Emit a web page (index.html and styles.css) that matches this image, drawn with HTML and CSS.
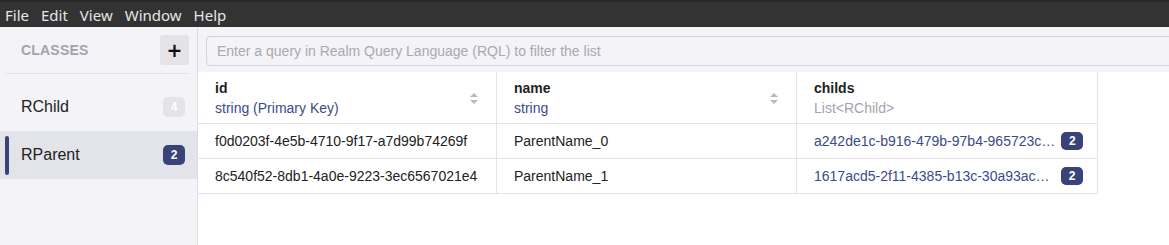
FILE: index.html
```html
<!DOCTYPE html>
<html lang="en">
<head>
  <meta charset="UTF-8">
  <title>Realm Studio</title>
  <link rel="stylesheet" href="styles.css">
</head>
<body>
<div class="menubar">
  <span>File</span>
  <span>Edit</span>
  <span>View</span>
  <span>Window</span>
  <span>Help</span>
</div>

<div class="app">
  <div class="sidebar">
    <div class="sidebar-head">
      <span class="sidebar-title">CLASSES</span>
      <button class="btn-add">+</button>
    </div>
    <div class="class-list">
      <div class="class-item">
        <span>RChild</span>
        <span class="badge badge-muted">4</span>
      </div>
      <div class="class-item selected">
        <span>RParent</span>
        <span class="badge">2</span>
      </div>
    </div>
  </div>

  <div class="main">
    <div class="query-bar">
      <input class="query-input" type="text" placeholder="Enter a query in Realm Query Language (RQL) to filter the list">
    </div>

    <div class="grid">
      <div class="row head">
        <div class="cell">
          <div class="col-info">
            <div class="col-name">id</div>
            <div class="col-type">string (Primary Key)</div>
          </div>
          <span class="sort"></span>
        </div>
        <div class="cell">
          <div class="col-info">
            <div class="col-name">name</div>
            <div class="col-type">string</div>
          </div>
          <span class="sort"></span>
        </div>
        <div class="cell">
          <div class="col-info">
            <div class="col-name">childs</div>
            <div class="col-type muted">List&lt;RChild&gt;</div>
          </div>
        </div>
      </div>

      <div class="row">
        <div class="cell">f0d0203f-4e5b-4710-9f17-a7d99b74269f</div>
        <div class="cell">ParentName_0</div>
        <div class="cell list-cell">
          <span class="link">a242de1c-b916-479b-97b4-965723c…</span>
          <span class="badge">2</span>
        </div>
      </div>

      <div class="row">
        <div class="cell">8c540f52-8db1-4a0e-9223-3ec6567021e4</div>
        <div class="cell">ParentName_1</div>
        <div class="cell list-cell">
          <span class="link">1617acd5-2f11-4385-b13c-30a93ac…</span>
          <span class="badge">2</span>
        </div>
      </div>
    </div>
  </div>
</div>
</body>
</html>
```

FILE: styles.css
```css
* { margin: 0; padding: 0; box-sizing: border-box; }

body {
  font-family: 'Liberation Sans', Arial, sans-serif;
  color: #222;
  background: #fff;
  width: 1169px;
  height: 245px;
  overflow: hidden;
}

/* Menu bar */
.menubar {
  height: 27px;
  background: #333333;
  color: #e6e6e6;
  font-family: 'Noto Sans', 'DejaVu Sans', sans-serif;
  font-size: 15px;
  display: flex;
  align-items: center;
  gap: 12px;
  padding-left: 5px;
  border-top: 2px solid #2a2a2a;
}

.app {
  display: flex;
  height: 218px;
}

/* Sidebar */
.sidebar {
  width: 198px;
  flex: none;
  background: #f3f3f8;
  border-right: 1px solid #dcdce2;
}

.sidebar-head {
  height: 47px;
  margin: 0 8px 0 5px;
  padding-left: 16px;
  display: flex;
  align-items: center;
  justify-content: space-between;
  border-bottom: 1px solid #e1e1e6;
}

.sidebar-title {
  font-size: 14px;
  font-weight: bold;
  color: #a3a3ad;
  letter-spacing: 0.2px;
}

.btn-add {
  width: 29px;
  height: 30px;
  border: none;
  border-radius: 3px;
  background: #e3e3e8;
  color: #111;
  font-family: 'DejaVu Sans', sans-serif;
  font-size: 19px;
  font-weight: bold;
  line-height: 30px;
}

.class-list {
  padding-top: 9px;
}

.class-item {
  height: 48px;
  display: flex;
  align-items: center;
  justify-content: space-between;
  padding: 0 12px 0 21px;
  font-size: 16px;
  color: #222;
  position: relative;
}

.class-item.selected {
  background: #e3e4e9;
}

.class-item.selected::before {
  content: '';
  position: absolute;
  left: 5px;
  top: 5px;
  bottom: 4px;
  width: 4px;
  border-radius: 2px;
  background: #39437a;
}

.badge {
  display: inline-flex;
  align-items: center;
  justify-content: center;
  min-width: 22px;
  height: 20px;
  border-radius: 5px;
  background: #39437a;
  color: #fff;
  font-size: 12px;
  font-weight: bold;
}

.badge-muted {
  background: #e3e3e8;
}

/* Main */
.main {
  flex: 1;
  min-width: 0;
  display: flex;
  flex-direction: column;
}

.query-bar {
  height: 45px;
  background: #f3f3f8;
  padding: 9px 0 0 8px;
}

.query-input {
  width: 980px;
  height: 30px;
  border: 1px solid #d2d2d8;
  border-radius: 4px;
  background: #f3f3f8;
  padding: 0 10px;
  font-family: 'Liberation Sans', Arial, sans-serif;
  font-size: 14px;
  color: #222;
}

.query-input::placeholder {
  color: #a9a9b2;
}

/* Table */
.grid {
  width: 900px;
  border-right: 1px solid #e3e3e8;
}

.row {
  display: grid;
  grid-template-columns: 299px 300px 300px;
  height: 35px;
  border-bottom: 1px solid #e3e3e8;
}

.row.head {
  height: 52px;
}

.cell {
  display: flex;
  align-items: center;
  padding: 0 16px 0 17px;
  font-size: 14px;
  color: #222;
  border-right: 1px solid #e3e3e8;
  min-width: 0;
  white-space: nowrap;
}

.cell:last-child {
  border-right: none;
}

.head .cell {
  justify-content: space-between;
  padding-top: 2px;
}

.col-name {
  font-weight: bold;
  font-size: 14px;
  line-height: 19px;
}

.col-type {
  color: #3b4a8c;
  font-size: 14px;
  line-height: 20px;
}

.col-type.muted {
  color: #a3a3ad;
}

.sort {
  width: 8px;
  height: 11px;
  margin-right: 2px;
  position: relative;
}

.sort::before,
.sort::after {
  content: '';
  position: absolute;
  left: 0;
  border-left: 4px solid transparent;
  border-right: 4px solid transparent;
}

.sort::before {
  top: 0;
  border-bottom: 4px solid #b8b8c0;
}

.sort::after {
  bottom: 0;
  border-top: 4px solid #b8b8c0;
}

.list-cell {
  justify-content: space-between;
  gap: 6px;
  padding-right: 14px;
}

.link {
  color: #3b4a8c;
}

.cell .badge {
  height: 18px;
  min-width: 22px;
  flex: none;
}
```
